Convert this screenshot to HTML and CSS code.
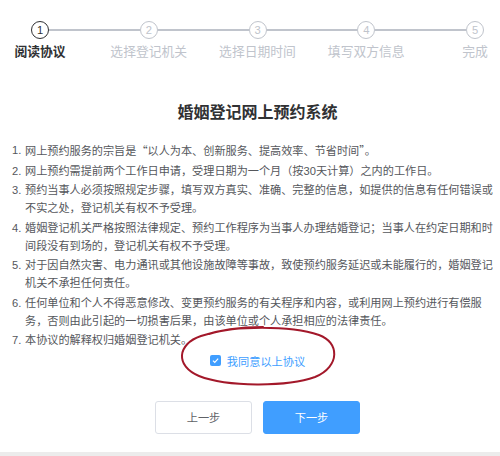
FILE: index.html
```html
<!DOCTYPE html>
<html lang="zh-CN">
<head>
<meta charset="utf-8">
<title>婚姻登记网上预约系统</title>
<link rel="stylesheet" href="styles.css">
</head>
<body>
<div class="page">
  <div class="steps">
    <div class="step active"><div class="dot">1</div><div class="name">阅读协议</div></div>
    <div class="bar"></div>
    <div class="step"><div class="dot">2</div><div class="name">选择登记机关</div></div>
    <div class="bar"></div>
    <div class="step"><div class="dot">3</div><div class="name">选择日期时间</div></div>
    <div class="bar"></div>
    <div class="step"><div class="dot">4</div><div class="name">填写双方信息</div></div>
    <div class="bar"></div>
    <div class="step"><div class="dot">5</div><div class="name">完成</div></div>
  </div>

  <h1 class="title">婚姻登记网上预约系统</h1>

  <ol class="terms">
    <li><span class="no">1.</span><span class="txt">网上预约服务的宗旨是<span class="q">“</span>以人为本、创新服务、提高效率、节省时间<span class="q">”</span>。</span></li>
    <li><span class="no">2.</span><span class="txt">网上预约需提前两个工作日申请，受理日期为一个月（按30天计算）之内的工作日。</span></li>
    <li><span class="no">3.</span><span class="txt">预约当事人必须按照规定步骤，填写双方真实、准确、完整的信息，如提供的信息有任何错误或不实之处，登记机关有权不予受理。</span></li>
    <li><span class="no">4.</span><span class="txt">婚姻登记机关严格按照法律规定、预约工作程序为当事人办理结婚登记；当事人在约定日期和时间段没有到场的，登记机关有权不予受理。</span></li>
    <li><span class="no">5.</span><span class="txt">对于因自然灾害、电力通讯或其他设施故障等事故，致使预约服务延迟或未能履行的，婚姻登记机关不承担任何责任。</span></li>
    <li><span class="no">6.</span><span class="txt">任何单位和个人不得恶意修改、变更预约服务的有关程序和内容，或利用网上预约进行有偿服务，否则由此引起的一切损害后果，由该单位或个人承担相应的法律责任。</span></li>
    <li><span class="no">7.</span><span class="txt">本协议的解释权归婚姻登记机关。</span></li>
  </ol>

  <div class="agree">
    <label class="check">
      <span class="box"><svg viewBox="0 0 12 12" width="11" height="11"><path d="M3.2 6.1 L5.2 8.1 L8.9 4" fill="none" stroke="#fff" stroke-width="1.3"/></svg></span>
      <span class="check-text">我同意以上协议</span>
    </label>
    <!-- hand-drawn red loop around the consent box -->
    <svg class="mark" viewBox="0 0 158 64" width="158" height="64">
      <path d="M30 10 C55 2 110 1 140 11 C160 18 162 42 136 53 C108 63 48 63 20 52 C-4 42 -2 20 22 12 C40 6 62 3 84 3" fill="none" stroke="#a3182a" stroke-width="2" stroke-linecap="round"/>
    </svg>
  </div>

  <div class="actions">
    <button class="btn">上一步</button>
    <button class="btn primary">下一步</button>
  </div>

  <div class="foot"></div>
</div>
</body>
</html>
```

FILE: styles.css
```css
html, body {
  margin: 0;
  padding: 0;
  overflow: hidden;
  background: #fff;
}

.page {
  width: 515px;
  height: 456px;
  display: flex;
  flex-direction: column;
  font-family: "Liberation Sans", "Noto Sans CJK SC", sans-serif;
  color: #606266;
}

/* progress steps */
.steps {
  display: flex;
  align-items: flex-start;
  padding: 21px 31px 0;
}

.step {
  width: 18px;
  display: flex;
  flex-direction: column;
  align-items: center;
}

.dot {
  width: 18px;
  height: 18px;
  box-sizing: border-box;
  border: 1.6px solid #c0c4cc;
  border-radius: 50%;
  color: #c0c4cc;
  font-size: 11.2px;
  display: flex;
  align-items: center;
  justify-content: center;
  background: #fff;
}

.name {
  white-space: nowrap;
  font-size: 12.8px;
  line-height: 26px;
  color: #c0c4cc;
}

.step.active .dot {
  border-color: #303133;
  color: #303133;
}

.step.active .name {
  color: #303133;
  font-weight: bold;
}

.bar {
  flex: 1;
  height: 1.6px;
  margin-top: 8.2px;
  background: #c0c4cc;
}

/* heading */
.title {
  margin: 37px 0 0;
  text-align: center;
  font-size: 16px;
  line-height: 22px;
  font-weight: bold;
  color: #303133;
}

/* agreement clauses */
.terms {
  list-style: none;
  margin: 17px 0 0;
  padding: 0 20px 0 12px;
  font-size: 11.15px;
  line-height: 18px;
  color: #55575c;
}

.terms li {
  display: flex;
  margin-bottom: 1.5px;
}

.terms .no {
  flex: 0 0 13px;
}

.terms .txt {
  flex: 1;
}

.terms .q {
  font-family: "Noto Sans CJK SC", sans-serif;
  font-feature-settings: "fwid";
}

/* consent checkbox */
.agree {
  position: relative;
  display: flex;
  justify-content: center;
  align-items: center;
  height: 20px;
}

.check {
  display: flex;
  align-items: center;
  gap: 6px;
  font-size: 11.2px;
  color: #409eff;
}

.box {
  width: 11px;
  height: 11px;
  border-radius: 2px;
  background: #409eff;
  display: flex;
  align-items: center;
  justify-content: center;
}

.mark {
  position: absolute;
  left: 50%;
  top: 50%;
  margin-left: -79px;
  margin-top: -37px;
  pointer-events: none;
}

/* navigation buttons */
.actions {
  display: flex;
  justify-content: center;
  gap: 11px;
  margin-top: 30px;
}

.btn {
  width: 97px;
  height: 33px;
  box-sizing: border-box;
  border: 1px solid #dcdfe6;
  border-radius: 3px;
  background: #fff;
  color: #606266;
  font-family: "Liberation Sans", "Noto Sans CJK SC", sans-serif;
  font-size: 11.2px;
  padding: 0;
}

.btn.primary {
  background: #409eff;
  border-color: #409eff;
  color: #fff;
}

.foot {
  margin-top: auto;
  height: 4px;
  background: #ececec;
}
```
